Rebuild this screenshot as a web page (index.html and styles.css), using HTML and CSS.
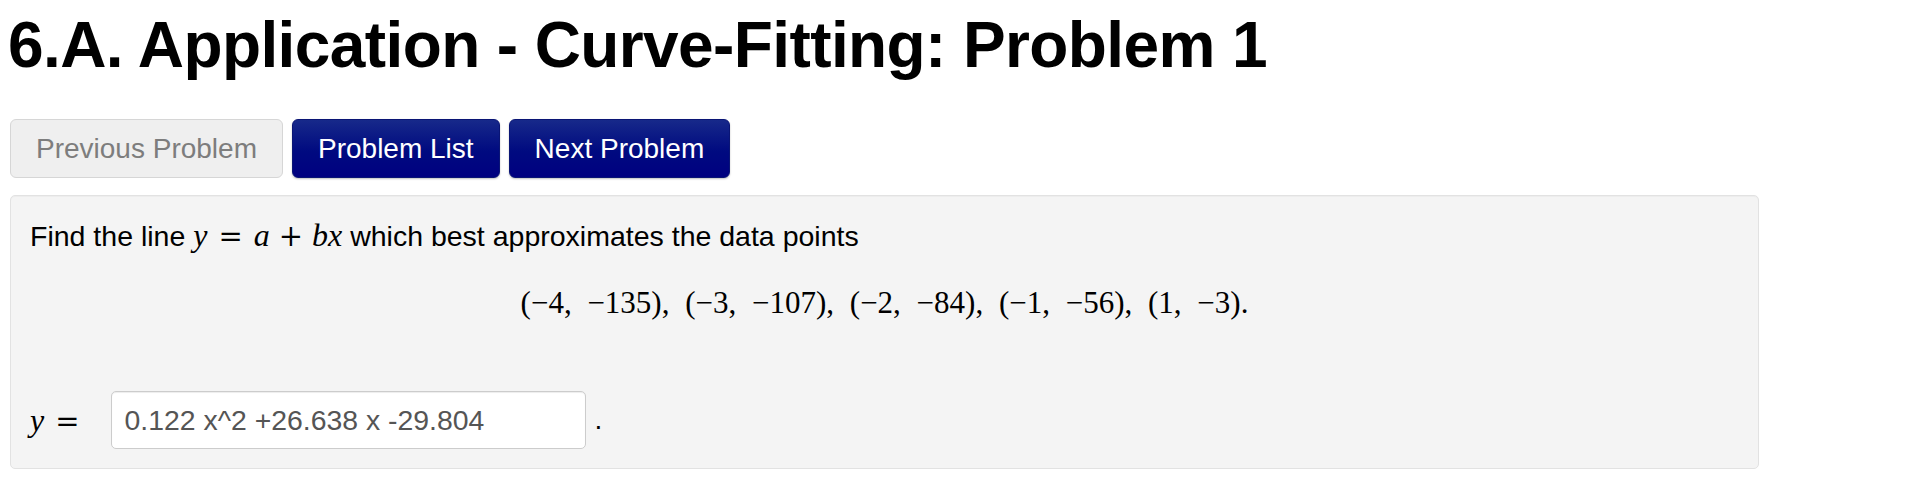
FILE: index.html
```html
<!DOCTYPE html>
<html lang="en">
<head>
<meta charset="utf-8">
<title>6.A. Application - Curve-Fitting: Problem 1</title>
<link rel="stylesheet" href="styles.css">
</head>
<body>
<div class="page">
  <h1 class="title">6.A. Application - Curve-Fitting: Problem 1</h1>
  <div class="nav">
    <span class="btn btn-disabled">Previous Problem</span>
    <a class="btn btn-primary" href="#">Problem List</a>
    <a class="btn btn-primary" href="#">Next Problem</a>
  </div>
  <div class="well">
    <p class="stmt">Find the line <span class="math"><span class="mi">y</span><span class="mo rel">=</span><span class="mi">a</span><span class="mo bin">+</span><span class="mi">b</span><span class="mi">x</span></span> which best approximates the data points</p>
    <div class="display">(−4, −135), (−3, −107), (−2, −84), (−1, −56), (1, −3).</div>
    <div class="answer">
      <span class="math label"><span class="mi">y</span><span class="mo rel">=</span></span>
      <input class="field" type="text" value="0.122 x^2 +26.638 x -29.804">
      <span class="stop">.</span>
    </div>
  </div>
</div>
</body>
</html>
```
FILE: styles.css
```css
html, body {
  margin: 0;
  padding: 0;
  background: #ffffff;
}

body {
  font-family: "Liberation Sans", Arial, sans-serif;
  color: #000;
}

.page {
  width: 1750px;
  padding-left: 10px;
}

.title {
  margin: 10px 0 0 -2px;
  font-size: 64px;
  line-height: 70px;
  font-weight: bold;
  letter-spacing: -0.6px;
  color: #000;
}

.nav {
  display: flex;
  gap: 9px;
  margin-top: 39px;
}

.btn {
  box-sizing: border-box;
  height: 59px;
  display: inline-flex;
  align-items: center;
  padding: 0 25px;
  font-size: 28px;
  border-radius: 6px;
  text-decoration: none;
  border: 1px solid transparent;
}

.btn-disabled {
  background: #efefef;
  border-color: #d6d6d6;
  color: #7d7d7d;
}

.btn-primary {
  background: linear-gradient(#17298a, #000a80 55%, #000080);
  border-color: #0a1575;
  color: #ffffff;
  box-shadow: 0 1px 2px rgba(0, 0, 0, 0.25);
}

.well {
  margin-top: 17px;
  box-sizing: border-box;
  width: 1749px;
  background: #f4f4f4;
  border: 1px solid #e2e2e2;
  border-radius: 5px;
  padding: 19px 19px 19px 19px;
  box-shadow: inset 0 1px 1px rgba(0, 0, 0, 0.03);
}

.stmt {
  margin: 0;
  font-size: 28.5px;
  line-height: 40px;
}

.math {
  font-family: "Liberation Serif", "Times New Roman", serif;
  font-size: 32px;
}

.mi {
  font-style: italic;
}

.mo {
  font-family: "DejaVu Serif", serif;
  font-size: 29px;
}

.rel {
  margin: 0 11px;
}

.bin {
  margin: 0 9px;
}

.display {
  margin-top: 27px;
  text-align: center;
  font-family: "Liberation Serif", "Times New Roman", serif;
  font-size: 31px;
  line-height: 40px;
  word-spacing: 8px;
}

.answer {
  display: flex;
  align-items: center;
  margin-top: 68px;
}

.label {
  line-height: 40px;
  margin-right: 23px;
}

.label .rel {
  margin-right: 8px;
}

.field {
  box-sizing: border-box;
  width: 475px;
  height: 58px;
  margin: 0;
  padding: 0 13px;
  font-family: "Liberation Sans", Arial, sans-serif;
  font-size: 28.4px;
  color: #555555;
  background: #ffffff;
  border: 1px solid #cccccc;
  border-radius: 5px;
  box-shadow: inset 0 1px 1px rgba(0, 0, 0, 0.075);
  outline: none;
}

.stop {
  margin-left: 9px;
  font-size: 28px;
  line-height: 40px;
}
```
